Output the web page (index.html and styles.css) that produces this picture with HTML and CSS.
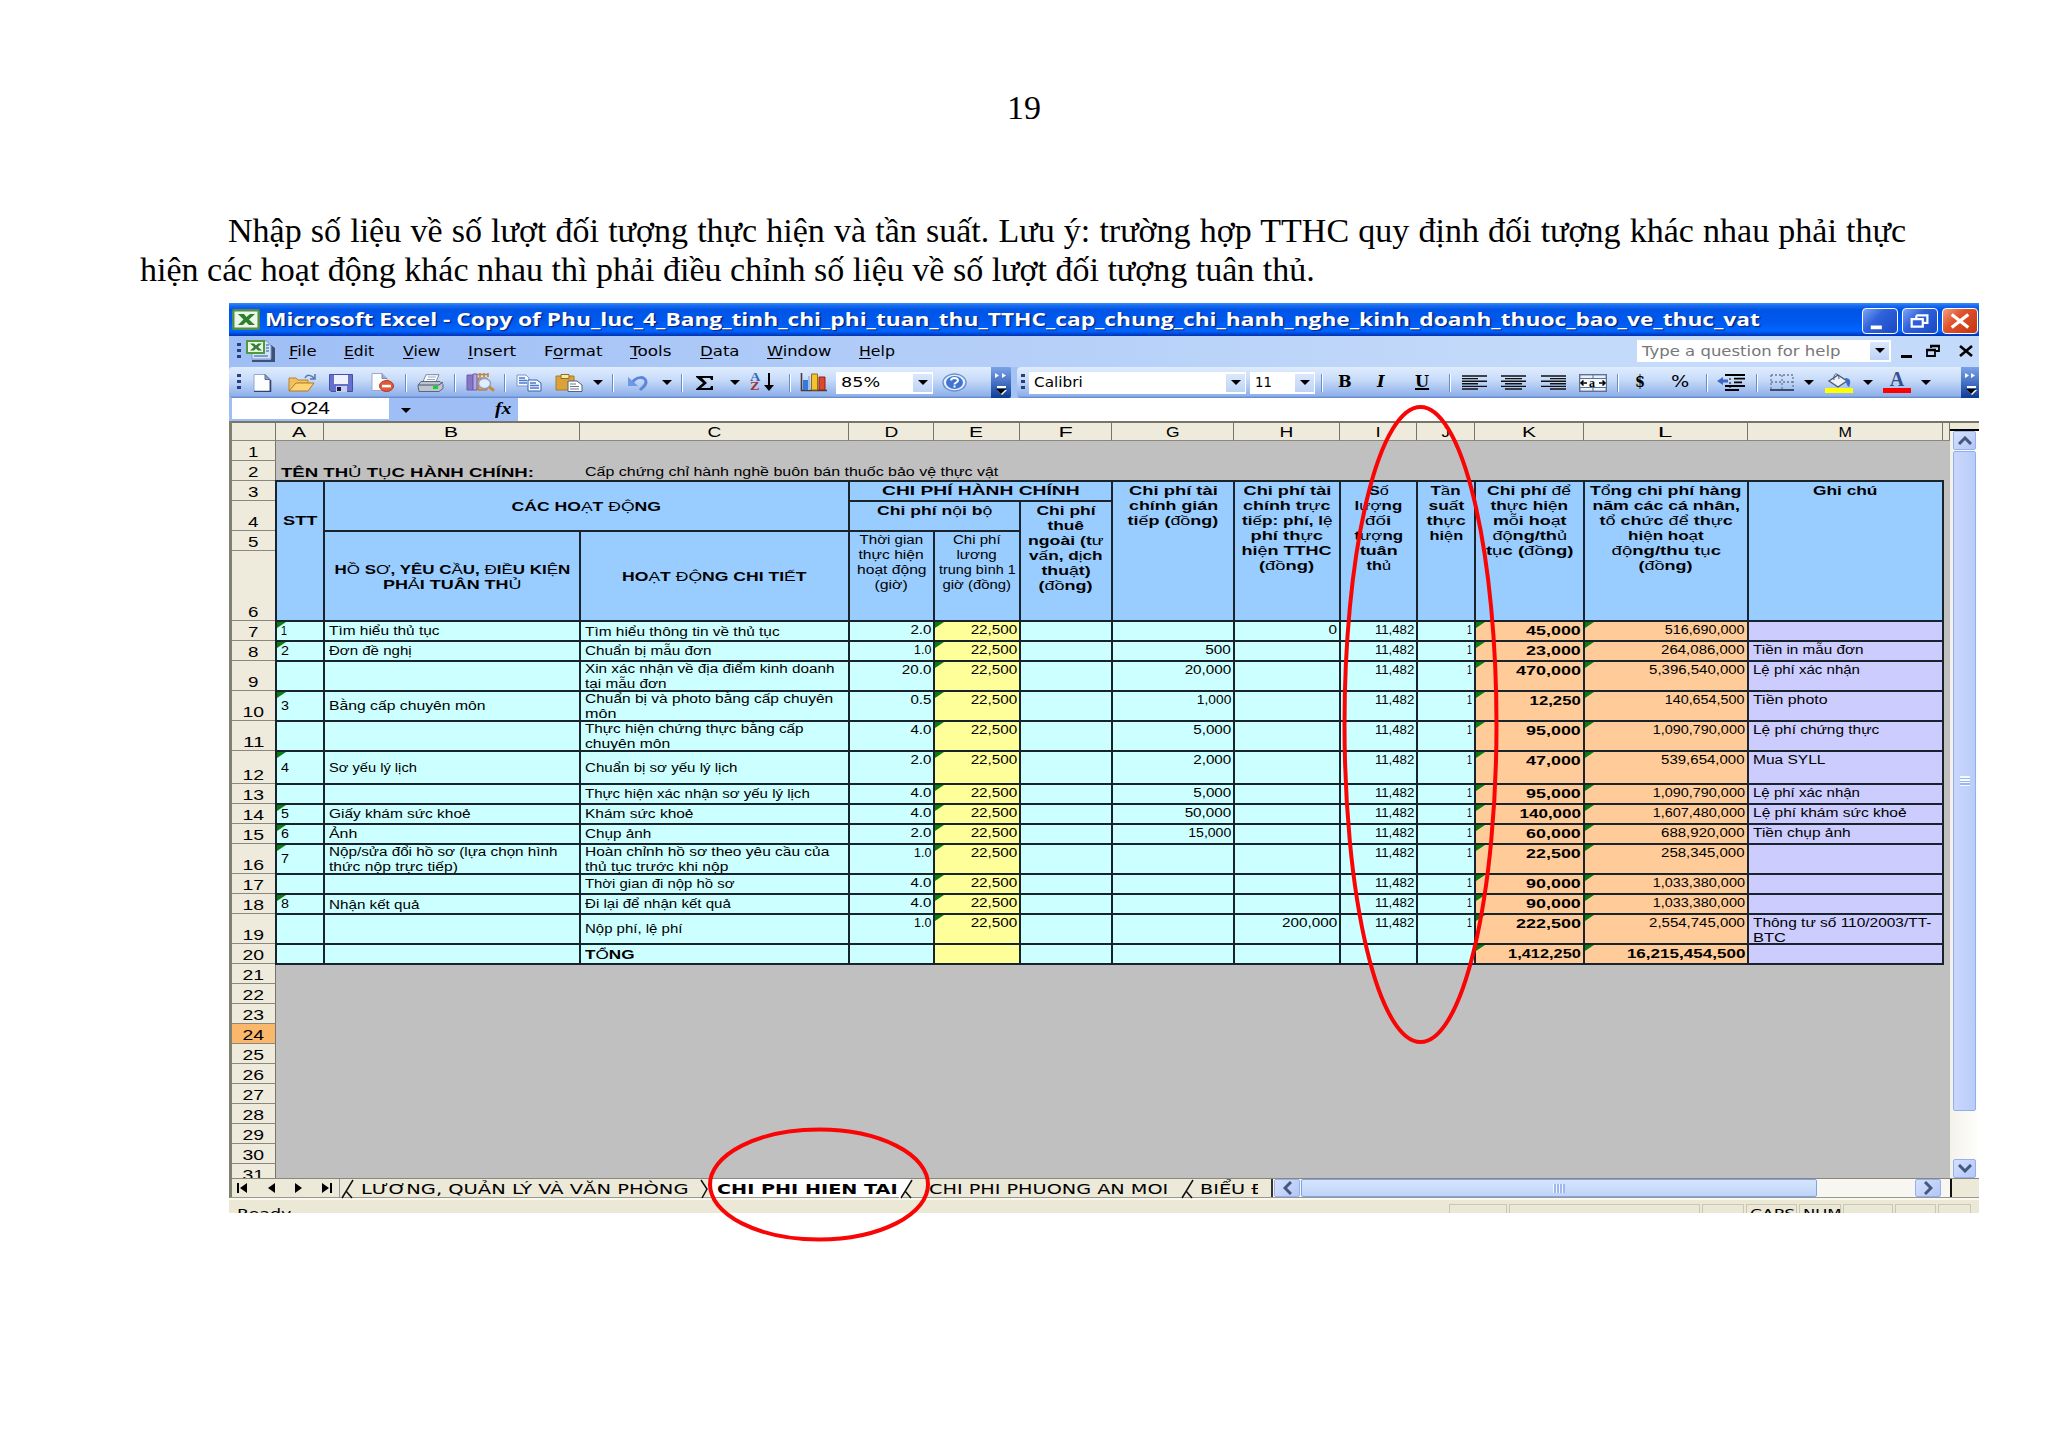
FILE: index.html
```html
<!DOCTYPE html>
<html lang="vi">
<head>
<meta charset="utf-8">
<title>19</title>
<link rel="stylesheet" href="styles.css">
</head>
<body>
<div class="pageno">19</div>
<p class="para">Nhập số liệu về số lượt đối tượng thực hiện và tần suất. Lưu ý: trường hợp TTHC quy định đối tượng khác nhau phải thực hiện các hoạt động khác nhau thì phải điều chỉnh số liệu về số lượt đối tượng tuân thủ.</p>

<div class="window">
  <div class="titlebar">
    <svg class="xl" width="28" height="21" viewBox="0 0 28 21"><rect width="28" height="21" rx="2" fill="#4f8f4a"/><rect x="2.500" y="2.500" width="23" height="16" fill="#eef6ea"/><path d="M6 5h6l2.500 3L18 5h5l-6 5.500 6 5.500h-6l-3-3-3 3H6l5.500-5.500z" fill="#2c8030"/></svg>
    <div class="title"><span class="fit" data-w="1495">Microsoft Excel - Copy of Phu_luc_4_Bang_tinh_chi_phi_tuan_thu_TTHC_cap_chung_chi_hanh_nghe_kinh_doanh_thuoc_bao_ve_thuc_vat</span></div>
    <div class="winbtns">
      <svg class="wb" viewBox="0 0 36 26"><path d="M8 18h12v4H8z" fill="#fff"/></svg>
      <svg class="wb" viewBox="0 0 36 26"><path d="M14 7h12v8h-4M14 7v3M9 11h12v8H9z" fill="none" stroke="#fff" stroke-width="2.400"/></svg>
      <svg class="wb red" viewBox="0 0 36 26"><path d="M9 6l18 14M27 6L9 20" stroke="#fff" stroke-width="3.600"/></svg>
    </div>
  </div>

  <div class="menubar">
    <i class="dots short"></i>
    <svg width="30" height="22" viewBox="0 0 30 22"><path d="M6 20h19V5l4 3v14H6z" fill="#3c5078"/><path d="M6 13v6h19V6l-4-5h-3v12z" fill="#d5e4fb" stroke="#7f97c8"/><path d="M20 5h3M20 8h3M20 11h3M8 16h14" stroke="#5f82c4" stroke-width="1.500"/><rect x="1" y="1" width="17" height="12" fill="#eef6e4" stroke="#4f9a3c" stroke-width="2"/><path d="M4 3.500h4l2 2 2-2h4L12 7l4 3.500h-4l-2-2-2 2H4L8 7z" fill="#2c8030"/></svg>
    <span class="m"><span class="fit" data-w="27"><u>F</u>ile</span></span>
    <span class="m"><span class="fit" data-w="30"><u>E</u>dit</span></span>
    <span class="m"><span class="fit" data-w="37"><u>V</u>iew</span></span>
    <span class="m"><span class="fit" data-w="48"><u>I</u>nsert</span></span>
    <span class="m"><span class="fit" data-w="58">F<u>o</u>rmat</span></span>
    <span class="m"><span class="fit" data-w="42"><u>T</u>ools</span></span>
    <span class="m"><span class="fit" data-w="39"><u>D</u>ata</span></span>
    <span class="m"><span class="fit" data-w="64"><u>W</u>indow</span></span>
    <span class="m"><span class="fit" data-w="36"><u>H</u>elp</span></span>
    <div class="ask"><span class="fit" data-w="199">Type a question for help</span><b class="drop"></b></div>
    <svg width="12" height="14" viewBox="0 0 12 14"><path d="M0 11h11v3H0z"/></svg>
    <svg width="15" height="14" viewBox="0 0 15 14"><path d="M5 4V2h8v5h-3M1 6h8v6H1z" fill="none" stroke="#000" stroke-width="1.800"/><path d="M4 2h10M0 6h10" stroke="#000" stroke-width="2.600"/></svg>
    <svg width="15" height="14" viewBox="0 0 15 14"><path d="M1 2l12 10M13 2L1 12" stroke="#000" stroke-width="2.600"/></svg>
  </div>

  <div class="toolrow">
    <div class="toolbar std">
      <i class="dots"></i>
      <svg width="19" height="18" viewBox="0 0 19 18"><path d="M1 .5h11l5 5v12H1z" fill="#fdfeff" stroke="#97a8cc"/><path d="M12 .5v5h5z" fill="#8fa2cc" stroke="#5a6c98"/><path d="M17.500 6v11.500H1" fill="none" stroke="#33436e" stroke-width="1.600"/></svg>
      <svg width="28" height="18" viewBox="0 0 28 18"><path d="M1 17V4h7l2 2h10v4z" fill="#f0c062" stroke="#b9852c"/><path d="M1 17L8 9h18l-6 8z" fill="#ffd474" stroke="#b07a1e"/><path d="M17 4c2-4 6-3 9 0M27 0v5h-5" fill="none" stroke="#5377a8" stroke-width="1.500"/></svg>
      <svg width="24" height="18" viewBox="0 0 24 18"><path d="M.5.5h23v17H2l-1.500-1.500z" fill="#6570cc" stroke="#474fa6"/><path d="M5 1h14v9H5z" fill="#eef2ff"/><path d="M7 12h11v6H7z" fill="#c8cdea"/><path d="M8 13h4v4H8z" fill="#171b4a"/></svg>
      <svg width="23" height="19" viewBox="0 0 23 19"><path d="M1 .5h10l5 5v12H1z" fill="#fdfeff" stroke="#9babcc"/><path d="M11 .5v5h5" fill="#9cadd2" stroke="#7888ac"/><ellipse cx="15.500" cy="13" rx="7" ry="5.500" fill="#e0573a" stroke="#b8391f"/><path d="M11 11.800h9v2.600h-9z" fill="#fff"/></svg>
      <i class="sep"></i>
      <svg width="27" height="18" viewBox="0 0 27 18"><path d="M9 .7h13l-3 7H6z" fill="#fff" stroke="#7a869e"/><path d="M11 3h8M10 5.500h8" stroke="#9aa6bd"/><path d="M4 7.500h19l3 3v4l-4 3H2l-1-6z" fill="#bcc5d0" stroke="#5b677c"/><path d="M1 11h21l4-3" fill="none" stroke="#4b5568"/><path d="M16 12h5v3h-5z" fill="#19d02c"/></svg>
      <i class="sep"></i>
      <svg width="29" height="19" viewBox="0 0 29 19"><path d="M1 2h6v15H1z" fill="#8676c4" stroke="#6a5bb0"/><path d="M7 1h4v16H7z" fill="#b4a6e2" stroke="#6a5bb0"/><path d="M12 5h9v12h-9z" fill="#e2a45c" stroke="#a5702e"/><path d="M11 1.500h11M14 0v4M18 0v4M22 0v4" stroke="#b98548" stroke-width="1.600"/><ellipse cx="18.500" cy="10.500" rx="6" ry="5" fill="#e2eeff" stroke="#8ba0c4" stroke-width="1.500"/><path d="M23 14l5 3.500" stroke="#c98a32" stroke-width="2.800"/></svg>
      <i class="sep"></i>
      <svg width="27" height="18" viewBox="0 0 27 18"><g fill="#f4f8ff"><path d="M1 1h9l3 3v8H1z" stroke="#7f97c4"/><path d="M12 6h9l4 3v8H12z" stroke="#3a5fae"/></g><path d="M3 4h6M3 6.500h8M3 9h8M14 9h6M14 11.500h9M14 14h9" stroke="#4a78cc" stroke-width="1.300"/></svg>
      <svg width="29" height="18" viewBox="0 0 29 18"><path d="M1 2h18v14H1z" fill="#dba23a" stroke="#a87a2a"/><path d="M6 .5h8v4H6z" fill="#ffe79a" stroke="#8a6d26"/><path d="M13 7h9l5 4v6.500H13z" fill="#fff" stroke="#55637c"/><path d="M15 10h6M15 12.500h9M15 15h9" stroke="#6b7993"/></svg>
      <i class="arr"></i>
      <i class="sep"></i>
      <svg width="22" height="16" viewBox="0 0 22 16"><path d="M5 8c4-7 14-7 14-1 0 4-3 5-6 8" fill="none" stroke="#5c87d8" stroke-width="3"/><path d="M1 2v9h10z" fill="#6f98e2"/></svg>
      <i class="arr"></i>
      <i class="sep"></i>
      <svg width="18" height="14" viewBox="0 0 18 14"><path d="M0 0h17v4h-2l-1-2H6l5 5-6 5h9l1-2h2v4H0v-1l7-6-7-6z"/></svg>
      <i class="arr"></i>
      <div class="sort"><span>A<br><b>Z</b></span><svg width="10" height="19" viewBox="0 0 10 19"><path d="M5 0v15" stroke="#000" stroke-width="2"/><path d="M0 12h10l-5 6z"/></svg></div>
      <i class="sep"></i>
      <svg width="28" height="19" viewBox="0 0 28 19"><path d="M1.500 0v17.500H27" fill="none" stroke="#4a3a38" stroke-width="1.600"/><path d="M3 7h5v10H3z" fill="#3a78d8"/><path d="M8 3h2v14H8z" fill="#9cc0f0"/><path d="M11.500 1h6v16h-6z" fill="#f3c22e" stroke="#946c10"/><path d="M19 4h6v13h-6z" fill="#e0482c" stroke="#8e2312"/></svg>
      <div class="combo z"><span class="fit" data-w="39">85%</span><b class="drop"></b></div>
      <svg width="25" height="19" viewBox="0 0 25 19"><ellipse cx="12.500" cy="9.500" rx="11.500" ry="8.500" fill="#e6f0ff" stroke="#6b90cc" stroke-width="1.400"/><ellipse cx="12.500" cy="9.500" rx="8.500" ry="6.500" fill="#3f74d0"/><path d="M9 7.500c0-3.500 7-3.500 7 0 0 2-3.500 2-3.500 4M12.500 12.500v2" fill="none" stroke="#fff" stroke-width="2"/></svg>
      <i class="more"><svg width="20" height="31" viewBox="0 0 20 31"><path d="M4 6l4 2.500-4 2.500zM11 6l4 2.500-4 2.500z" fill="#fff"/><path d="M6 20h9" stroke="#fff" stroke-width="2"/><path d="M6 23h10l-5 5z" fill="#fff"/><path d="M5 22h10l-5 5z"/></svg></i>
    </div>
    <div class="toolbar fmt">
      <i class="dots"></i>
      <div class="combo f"><span class="fit" data-w="49">Calibri</span><b class="drop"></b></div>
      <div class="combo s"><span class="fit" data-w="17">11</span><b class="drop"></b></div>
      <i class="sep"></i>
      <b class="g">B</b><b class="g"><em>I</em></b><b class="g un">U</b>
      <i class="sep"></i>
      <svg class="ln" width="25" height="15" viewBox="0 0 25 15"><path d="M0 1h25M0 3.600h16M0 6.200h25M0 8.800h16M0 11.400h25M0 14h16"/></svg>
      <svg class="ln" width="25" height="15" viewBox="0 0 25 15"><path d="M0 1h25M4 3.600h17M0 6.200h25M4 8.800h17M0 11.400h25M4 14h17"/></svg>
      <svg class="ln" width="25" height="15" viewBox="0 0 25 15"><path d="M0 1h25M9 3.600h16M0 6.200h25M9 8.800h16M0 11.400h25M9 14h16"/></svg>
      <svg width="28" height="18" viewBox="0 0 28 18"><rect x=".7" y=".7" width="26.600" height="16.600" fill="#e8f0fc" stroke="#5f7190" stroke-width="1.400"/><path d="M14 1v16M1 4.500h26M1 13.500h26" stroke="#5f7190"/><rect x="1.500" y="5" width="25" height="8" fill="#f7faff"/><path d="M2 9h6M26 9h-6M4.500 6.500L2 9l2.500 2.500M23.500 6.500L26 9l-2.500 2.500" fill="none" stroke="#000" stroke-width="1.600"/><text x="10" y="13" class="ma">a</text></svg>
      <i class="sep"></i>
      <b class="g dl">$</b><b class="pc">%</b>
      <i class="sep"></i>
      <svg width="29" height="17" viewBox="0 0 29 17"><path d="M8 1h20M17 4.700h11M17 8.400h8M8 12h20M8 16h14" stroke="#000" stroke-width="1.800"/><path d="M13 0v17" stroke="#000" stroke-dasharray="2 2"/><path d="M0 7l6-4v2.500h5v3H6V11z" fill="#3c68c8"/></svg>
      <i class="sep"></i>
      <svg width="24" height="17" viewBox="0 0 24 17"><path d="M1 1h22v14M1 1v14M12 1v14M1 8h22" fill="none" stroke="#6b7a98" stroke-width="1.300" stroke-dasharray="2 2"/><path d="M0 16h24" stroke="#33415e" stroke-width="1.800"/></svg>
      <i class="arr"></i>
      <svg width="28" height="21" viewBox="0 0 28 21"><path d="M4 9l9-6 9 6-9 6z" fill="#eef2f8" stroke="#4b5870" stroke-width="1.400"/><path d="M9 8C8 0 14 0 14 7" fill="none" stroke="#4b5870"/><path d="M20 6c6 0 6 4 4 9-2-1-3-4-4-9z" fill="#3c6dc2"/><path d="M0 16h28v5H0z" fill="#ff0"/></svg>
      <i class="arr"></i>
      <div class="fc">A</div>
      <i class="arr"></i>
      <i class="more"><svg width="18" height="31" viewBox="0 0 18 31"><path d="M4 6l4 2.500-4 2.500zM10 6l4 2.500-4 2.500z" fill="#fff"/><path d="M6 20h9" stroke="#fff" stroke-width="2"/><path d="M6 23h10l-5 5z" fill="#fff"/><path d="M5 22h10l-5 5z"/></svg></i>
    </div>
  </div>

  <div class="formula">
    <div class="namebox"><span class="fit c" data-w="39">O24</span></div>
    <i class="arr"></i>
    <em class="fx"><span class="fit" data-w="16">fx</span></em>
    <div class="finput"></div>
  </div>

  <div class="work">
    <div class="sheet" id="sheet"></div>
    <div class="vscroll">
      <div class="split"></div>
      <div class="sb"><svg width="14" height="9" viewBox="0 0 14 9"><path d="M1 8l6-6 6 6" /></svg></div>
      <div class="vthumb"><i></i></div>
      <div class="gap"></div>
      <div class="sb"><svg width="14" height="9" viewBox="0 0 14 9"><path d="M1 1l6 6 6-6"/></svg></div>
    </div>
  </div>

  <div class="tabs">
    <div class="nav">
      <svg width="11" height="10" viewBox="0 0 11 10"><path d="M0 0h2v10H0zM10 0v10L3 5z"/></svg>
      <svg width="11" height="10" viewBox="0 0 11 10"><path d="M8 0v10L1 5z"/></svg>
      <svg width="11" height="10" viewBox="0 0 11 10"><path d="M1 0v10l7-5z"/></svg>
      <svg width="11" height="10" viewBox="0 0 11 10"><path d="M0 0v10l7-5zM8 0h2v10H8z"/></svg>
    </div>
    <svg class="sl" width="14" height="20" viewBox="0 0 14 20"><path d="M13 1L2 19M6 12l6 7"/></svg>
    <div class="tab t1"><span class="fit" data-w="328">LƯƠNG, QUẢN LÝ VÀ VĂN PHÒNG</span></div>
    <svg class="sl" width="10" height="20" viewBox="0 0 10 20"><path d="M2 1l6 9-5 9"/></svg>
    <div class="tab t2"><span class="fit" data-w="181">CHI PHI HIEN TAI</span></div>
    <svg class="sl on" width="14" height="20" viewBox="0 0 14 20"><path class="bg" d="M0 0h13L7 12 3 19H0z"/><path d="M13 1L2 19M6 12l6 7"/></svg>
    <div class="tab t3"><span class="fit" data-w="239">CHI PHI PHUONG AN MOI</span></div>
    <svg class="sl" width="14" height="20" viewBox="0 0 14 20"><path d="M13 1L2 19M6 12l6 7"/></svg>
    <div class="tab t4"><span class="fit" data-w="66">BIỂU Đ</span></div>
    <div class="hscroll">
      <div class="sb h"><svg width="9" height="14" viewBox="0 0 9 14"><path d="M8 1L2 7l6 6"/></svg></div>
      <div class="hthumb"><i></i></div>
      <div class="gap"></div>
      <div class="sb h"><svg width="9" height="14" viewBox="0 0 9 14"><path d="M1 1l6 6-6 6"/></svg></div>
    </div>
  </div>

  <div class="status">
    <div class="ready"><span class="fit" data-w="54">Ready</span></div>
    <i></i><i></i><i></i><i><span class="fit" data-w="45">CAPS</span></i><i><span class="fit" data-w="38">NUM</span></i><i></i><i></i><i></i>
  </div>
</div>

<svg class="marks" width="2048" height="1448" viewBox="0 0 2048 1448"><ellipse cx="1420.500" cy="724.500" rx="76" ry="317.500"/><ellipse cx="819" cy="1184.500" rx="109" ry="55"/></svg>
<script src="app.js"></script>
</body>
</html>
```
FILE: styles.css
```css
* { box-sizing: border-box; }
body { margin: 0; background: #fff; width: 2048px; height: 1448px; overflow: hidden; position: relative; color: #000; font-family: "DejaVu Sans", sans-serif; }
.pageno { font: 34px/40px "Liberation Serif", serif; text-align: center; padding-top: 88px; }
.para { font: 34px/39px "Liberation Serif", serif; margin: 83px 142px 0 140px; height: 92px; text-indent: 88px; text-align: justify; }
.fit { display: inline-block; flex: none; white-space: nowrap; transform-origin: 0 50%; }
.fit.c { transform-origin: 50% 50%; }
.fit.r { transform-origin: 100% 50%; }
.window { margin-left: 229px; width: 1750px; height: 910px; background: #ece9d8; overflow: hidden; }

.titlebar { height: 33px; display: flex; align-items: center; padding: 2px 1px 0 3px; background: linear-gradient(#3a8df5 0, #1a6cf0 8%, #0055e5 20%, #0058ee 55%, #0066ff 85%, #003dc8 96%, #0035b0 100%); }
.xl { margin-bottom: 3px; }
.title { width: 1598px; margin-left: 5px; color: #fff; font: bold 17px/24px "Open Sans", sans-serif; padding-bottom: 2px; text-shadow: 1px 1px 1px #0a1f70; }
.winbtns { display: flex; gap: 4px; margin-left: auto; }
.wb { width: 36px; height: 26px; border: 1.500px solid #fff; border-radius: 4px; background: linear-gradient(135deg, #7aa3f5, #2f62dc 40%, #1c48c4); }
.wb.red { background: linear-gradient(135deg, #f0a080, #e0512c 40%, #c2360f); }

.menubar { height: 31px; display: grid; align-items: center; padding: 0 0 2px 8px; background: linear-gradient(90deg, #9ebef5, #c4dafa 75%); grid-template-columns: 9px 43px 55px 59px 65px 76px 86px 70px 67px 92px 778px 264px 25px 33px 18px; font-size: 14px; line-height: 20px; }
.dots { width: 4px; height: 18px; background: repeating-linear-gradient(#27417c 0 3px, transparent 3px 6px); }
.dots.short { height: 15px; }
.m u { text-underline-offset: 2px; }
.m { padding-top: 1px; }
.ask { width: 254px; height: 22px; background: #fff; display: flex; align-items: center; padding: 0 2px 0 5px; color: #777; }
.drop { margin-left: auto; width: 19px; height: 18px; flex: none; background: linear-gradient(#dbe8fc, #bdd3f5); display: grid; place-items: center; }
.drop::after, .arr::after { content: ""; display: block; border: 5px solid transparent; border-top-color: #000; border-bottom: 0; }

.toolrow { height: 31px; display: flex; background: #a5c2f4; }
.toolbar { height: 31px; display: grid; align-items: center; background: linear-gradient(#e0ecfe, #c8dcf9 40%, #8fb0ea 93%, #5d82c8); border-radius: 4px 0 0 4px; }
.std { width: 781px; padding-left: 8px; margin-right: 7px; grid-template-columns: 16px 35px 41px 42px 34px 12px 37px 12px 38px 12px 39px 38px 19px 15px 35px 19px 15px 34px 20px 39px 11px 36px 106px 49px 19px; }
.fmt { width: 962px; padding-left: 4px; grid-template-columns: 8px 221px 71px 17px 39px 38px 34px 13px 39px 40px 38px 38px 18px 36px 35px 11px 39px 14px 34px 21px 38px 20px 38px 40px 18px; }
.sep { width: 2px; height: 18px; background: #6a8ccb; border-right: 1px solid #fff; }
.combo { height: 22px; background: #fff; display: flex; align-items: center; padding: 0 1px 2px 5px; font-size: 14px; }
.combo .drop { margin-top: 2px; }
.combo.z { width: 97px; } .combo.f { width: 217px; } .combo.s { width: 65px; }
.more { width: 20px; height: 31px; background: linear-gradient(#7ba2e7, #4c77c8 45%, #0c3a94); border-radius: 0 2px 2px 0; }
.more svg { display: block; }
.g { font: 900 17px/18px "DejaVu Serif", serif; transform: scaleX(.95); transform-origin: 0 50%; padding-bottom: 3px; }
.un { text-decoration: underline; text-decoration-thickness: 2px; }
.dl { transform: scaleX(.85); }
.pc { font: 16px/18px "DejaVu Sans", sans-serif; padding-bottom: 2px; transform: scaleX(1.2); transform-origin: 0 50%; }
.ln { stroke: #111; stroke-width: 1.400; }
.ma { font: bold 12px "Liberation Serif", serif; }
.sort { display: flex; font: bold 12px/9px "Liberation Serif", serif; color: #3467b8; gap: 5px; }
.sort span { transform: scaleX(1.2); transform-origin: 0 0; }
.sort b { color: #a33232; }
.fc { width: 28px; height: 21px; border-bottom: 5px solid #f00; font: bold 20px/15px "Liberation Serif", serif; color: #34508e; text-align: center; }

.formula { height: 23px; background: #9ebef5; display: flex; padding-left: 3px; align-items: flex-start; }
.namebox { width: 157px; height: 21px; background: #fff; display: flex; justify-content: center; align-items: center; font: 16px/20px "Liberation Sans", sans-serif; }
.formula .arr { margin: 10px 0 0 12px; width: 94px; }
.arr::after { width: 0; }
.fx { font: italic bold 16px/21px "Liberation Serif", serif; width: 23px; }
.finput { flex: 1; height: 23px; background: #fff; }

.work { height: 757px; display: flex; background: #c0c0c0; border-left: 3px solid #808070; }
.sheet { width: 1718px; height: 757px; overflow: hidden; display: grid; grid-template-columns: 44px 48px 256px 269px 85px 86px 92px 122px 106px 77px 58px 109px 164px 195px 7px; grid-template-rows: 20px 20px 20px 20px 30px 20px 70px 20px 20px 30px 30px 30px 33px 20px 20px 20px 30px 20px 20px 30px repeat(12, 20px); font: 12.500px/15px "Liberation Sans", sans-serif; }
.hd { background: #efebdc; border-right: 1.500px solid #77756a; border-bottom: 1.500px solid #8a887c; font: 15px/16px "Liberation Sans", sans-serif; display: flex; justify-content: center; align-items: flex-end; overflow: hidden; }
.hd.top { border-top: 2px solid #77756a; align-items: center; }
.hd.sel { background: #fbb86c; }
.cell { display: flex; flex-direction: column; border: 2px solid #18232b; margin: -1px; padding: 1px 2px 0 4px; position: relative; min-width: 0; }
.cell > div { height: 15px; display: flex; flex: none; }
.cell.mid { justify-content: center; }
.cell.bot { justify-content: flex-end; }
.cell.cen > div { justify-content: center; }
.cell.cen { padding: 1px 0 0; }
.cell.rt > div { justify-content: flex-end; }
.cell.bd { font-weight: bold; font-size: 13px; }
.cell .n { font-weight: normal; }
.cell.plain { border-color: transparent; }
.blue { background: #99ccff; } .cyan { background: #ccffff; } .yel { background: #ffff99; } .org { background: #ffcc99; } .lil { background: #ccccff; }
.tri::before { content: ""; position: absolute; left: 0; top: 0; border-top: 6px solid #0a7d12; border-right: 9px solid transparent; }

.vscroll { width: 29px; display: flex; flex-direction: column; align-items: center; background: linear-gradient(90deg, #f4f2ea, #fefefb); border-top: 2px solid #77756a; }
.split { height: 8px; width: 29px; background: #ece9d8; border-bottom: 2px solid #000; flex: none; }
.sb { width: 23px; height: 19px; flex: none; background: linear-gradient(135deg, #d5e0fd, #b3c6f6); border: 1px solid #96b0ee; border-radius: 2px; display: grid; place-items: center; }
.sb path { fill: none; stroke: #43587e; stroke-width: 3; }
.vthumb { width: 23px; height: 660px; margin-top: 1px; background: linear-gradient(90deg, #cbd6fd, #b8cdf8); border: 1px solid #8fb0ee; border-radius: 2px; display: grid; place-items: center; flex: none; }
.vthumb i { width: 10px; height: 10px; background: repeating-linear-gradient(#f4f8ff 0 1.500px, #9cb6f0 1.500px 3px); }
.gap { flex: 1; }

.tabs { height: 20px; display: flex; align-items: stretch; background: #ece9d8; border-left: 3px solid #808070; border-top: 1px solid #8a887c; border-bottom: 1px solid #9a988c; font-size: 14px; line-height: 20px; }
.nav { width: 108px; display: grid; grid-template-columns: 30px 27px 28px 20px; padding-left: 5px; align-items: center; border-right: 1px solid #999; }
.sl { flex: none; fill: none; stroke: #111; stroke-width: 1.500; }
.sl .bg { fill: #fff; stroke: none; }
.tab { flex: none; overflow: hidden; }
.t1 { width: 345px; padding-left: 7px; }
.t2 { width: 190px; background: #fff; padding-left: 8px; font-weight: bold; }
.t3 { width: 267px; padding-left: 16px; }
.t4 { width: 64px; padding-left: 6px; }
.tabs .hscroll { flex: none; width: 681px; margin-left: auto; margin-right: 27px; border-left: 2px solid #333; border-right: 2px solid #111; padding: 0 9px 0 1px; display: flex; background: #f7f6f0; }
.sb.h { width: 26px; height: 18px; }
.hthumb { width: 516px; height: 18px; margin-left: 1px; background: linear-gradient(#d6e5fd, #bed4fa); border: 1px solid #7fa3e4; border-radius: 2px; display: grid; place-items: center; }
.hthumb i { width: 12px; height: 9px; background: repeating-linear-gradient(90deg, #f4f8ff 0 1.500px, #9cb6f0 1.500px 3px); }

.status { height: 15px; border-top: 2px solid #faf9f0; display: grid; background: #ebe8d6; grid-template-columns: 1218px 58px 191px 42px 51px 42px 50px 41px 33px; column-gap: 2px; padding-top: 4px; font-size: 13px; line-height: 15px; overflow: hidden; }
.ready { padding: 2px 0 0 8px; }
.status i { font-style: normal; height: 20px; border: 1px solid #c9c6b6; padding: 1px 0 0 3px; }
.marks { position: absolute; left: 0; top: 0; fill: none; stroke: #fa0505; stroke-width: 4; }
```
FILE: app.js
```js
const sheet = document.getElementById('sheet');
const THIN = /[\u1E00-\u1EFF\u0110\u0111\u01A0\u01A1\u01AF\u01B0]/g;

function div(cls, c, r, c2, r2) {
  const d = document.createElement('div');
  d.className = cls;
  d.style.gridArea = `${r + 1} / ${c + 2} / ${(r2 || r) + 2} / ${(c2 || c) + 3}`;
  sheet.appendChild(d);
  return d;
}
// lines: [text, width, text, width, ...]
function cell(cls, c, r, lines = [], c2, r2) {
  const d = div('cell ' + cls, c, r, c2, r2);
  const side = /\bcen\b/.test(cls) ? ' c' : /\brt\b/.test(cls) ? ' r' : '';
  for (let i = 0; i < lines.length; i += 2) {
    const t = /\bbd\b/.test(cls) ? lines[i].replace(THIN, '<span class="n">$&</span>') : lines[i];
    d.insertAdjacentHTML('beforeend', `<div><span class="fit${side}" data-w="${lines[i + 1]}">${t}</span></div>`);
  }
}
function num(cls, c, r, s) {
  if (!s) return cell(cls, c, r);
  const b = /\bbd\b/.test(cls);
  let w = 0;
  for (const ch of s) w += /[,.]/.test(ch) ? (b ? 5 : 3.3) : ch === '1' ? (b ? 6.5 : 5) : (b ? 10 : 8.6);
  cell(cls + ' rt', c, r, [s, w]);
}

// sheet title
cell('plain bd bot', 0, 2, ['TÊN THỦ TỤC HÀNH CHÍNH:', 253], 1);
cell('plain bot', 2, 2, ['Cấp chứng chỉ hành nghề buôn bán thuốc bảo vệ thực vật', 413], 6);

// heading block
const H = 'blue bd cen';
cell(H, 0, 3, ['', 0, '', 0, 'STT', 35], 0, 6);
cell(H + ' mid', 1, 3, ['CÁC HOẠT ĐỘNG', 150], 2, 4);
cell(H + ' mid', 1, 5, ['HỒ SƠ, YÊU CẦU, ĐIỀU KIỆN', 236, 'PHẢI TUÂN THỦ', 138], 1, 6);
cell(H + ' mid', 2, 5, ['HOẠT ĐỘNG CHI TIẾT', 185], 2, 6);
cell(H, 3, 3, ['CHI PHÍ HÀNH CHÍNH', 198], 5);
cell(H, 3, 4, ['Chi phí nội bộ', 115], 4);
cell('blue cen', 3, 5, ['Thời gian', 64, 'thực hiện', 65, 'hoạt động', 70, '(giờ)', 33], 3, 6);
cell('blue cen', 4, 5, ['Chi phí', 48, 'lương', 40, 'trung bình 1', 77, 'giờ (đồng)', 69], 4, 6);
cell(H, 5, 4, ['Chi phí', 59, 'thuê', 36, 'ngoài (tư', 76, 'vấn, dịch', 74, 'thuật)', 49, '(đồng)', 54], 5, 6);
cell(H, 6, 3, ['Chi phí tài', 89, 'chính gián', 89, 'tiếp (đồng)', 91], 6, 6);
cell(H, 7, 3, ['Chi phí tài', 88, 'chính trực', 88, 'tiếp: phí, lệ', 91, 'phí thực', 72, 'hiện TTHC', 90, '(đồng)', 55], 7, 6);
cell(H, 8, 3, ['Số', 20, 'lượng', 48, 'đối', 26, 'tượng', 48, 'tuân', 37, 'thủ', 25], 8, 6);
cell(H, 9, 3, ['Tần', 30, 'suất', 36, 'thực', 39, 'hiện', 34], 9, 6);
cell(H, 10, 3, ['Chi phí để', 84, 'thực hiện', 78, 'mỗi hoạt', 73, 'động/thủ', 74, 'tục (đồng)', 87], 10, 6);
cell(H, 11, 3, ['Tổng chi phí hàng', 151, 'năm các cá nhân,', 147, 'tổ chức để thực', 133, 'hiện hoạt', 76, 'động/thu tục', 110, '(đồng)', 54], 11, 6);
cell(H, 12, 3, ['Ghi chú', 64], 12, 6);

// A, B, C, D, G, H, K, L, M for rows 7 to 19
const rows = [
  ['1', ['Tìm hiểu thủ tục', 111], ['Tìm hiểu thông tin về thủ tục', 195], '2.0', '', '0', '45,000', '516,690,000', []],
  ['2', ['Đơn đề nghị', 83], ['Chuẩn bị mẫu đơn', 126], '1.0', '500', '', '23,000', '264,086,000', ['Tiền in mẫu đơn', 110]],
  ['', [], ['Xin xác nhận về địa điểm kinh doanh', 249, 'tại mẫu đơn', 82], '20.0', '20,000', '', '470,000', '5,396,540,000', ['Lệ phí xác nhận', 107]],
  ['3', ['Bằng cấp chuyên môn', 156], ['Chuẩn bị và photo bằng cấp chuyên', 248, 'môn', 31], '0.5', '1,000', '', '12,250', '140,654,500', ['Tiền photo', 75]],
  ['', [], ['Thực hiện chứng thực bằng cấp', 219, 'chuyên môn', 85], '4.0', '5,000', '', '95,000', '1,090,790,000', ['Lệ phí chứng thực', 126]],
  ['4', ['Sơ yếu lý lịch', 88], ['Chuẩn bị sơ yếu lý lịch', 152], '2.0', '2,000', '', '47,000', '539,654,000', ['Mua SYLL', 72]],
  ['', [], ['Thực hiện xác nhận sơ yếu lý lịch', 225], '4.0', '5,000', '', '95,000', '1,090,790,000', ['Lệ phí xác nhận', 107]],
  ['5', ['Giấy khám sức khoẻ', 142], ['Khám sức khoẻ', 109], '4.0', '50,000', '', '140,000', '1,607,480,000', ['Lệ phí khám sức khoẻ', 154]],
  ['6', ['Ảnh', 28], ['Chụp ảnh', 66], '2.0', '15,000', '', '60,000', '688,920,000', ['Tiền chụp ảnh', 98]],
  ['7', ['Nộp/sửa đổi hồ sơ (lựa chọn hình', 229, 'thức nộp trực tiếp)', 129], ['Hoàn chỉnh hồ sơ theo yêu cầu của', 244, 'thủ tục trước khi nộp', 143], '1.0', '', '', '22,500', '258,345,000', []],
  ['', [], ['Thời gian đi nộp hồ sơ', 150], '4.0', '', '', '90,000', '1,033,380,000', []],
  ['8', ['Nhận kết quả', 90], ['Đi lại để nhận kết quả', 146], '4.0', '', '', '90,000', '1,033,380,000', []],
  ['', [], ['Nộp phí, lệ phí', 97], '1.0', '', '200,000', '222,500', '2,554,745,000', ['Thông tư số 110/2003/TT-', 178, 'BTC', 33]]
];
rows.forEach((d, i) => {
  const r = i + 7;
  cell('cyan mid' + (d[0] ? ' tri' : ''), 0, r, d[0] ? [d[0], d[0] === '1' ? 6 : 8] : []);
  cell('cyan ' + (r === 18 ? 'bot' : 'mid'), 1, r, d[1]);
  cell('cyan ' + (r === 7 ? 'bot' : 'mid'), 2, r, d[2]);
  num('cyan', 3, r, d[3]);
  num('yel tri', 4, r, '22,500');
  cell('cyan', 5, r);
  num('cyan', 6, r, d[4]);
  num('cyan', 7, r, d[5]);
  num('cyan', 8, r, '11,482');
  num('cyan', 9, r, '1');
  num('org bd tri', 10, r, d[6]);
  num('org tri', 11, r, d[7]);
  cell('lil', 12, r, d[8]);
});
for (const c of [0, 1, 3, 5, 6, 7, 8, 9]) cell('cyan', c, 20);
cell('cyan bd mid', 2, 20, ['TỔNG', 50]);
cell('yel', 4, 20);
num('org bd tri', 10, 20, '1,412,250');
num('org bd tri', 11, 20, '16,215,454,500');
cell('lil', 12, 20);

// column letters and row numbers
div('hd top', -1, 0);
'ABCDEFGHIJKLM'.split('').forEach((l, i) => {
  div('hd top', i, 0).innerHTML = `<span class="fit c" data-w="${l === 'I' ? 5 : l === 'J' ? 9 : 14}">${l}</span>`;
});
div('hd top', 13, 0);
for (let r = 1; r <= 31; r++) {
  div('hd', -1, r).innerHTML = `<span class="fit c" data-w="${r < 10 ? 10 : 22}">${r}</span>`;
  if (r === 24) sheet.lastChild.classList.add('sel');
}

// stretch each label to its set width
document.querySelectorAll('.fit').forEach(s => {
  const w = s.offsetWidth;
  if (w) s.style.transform = `scaleX(${s.dataset.w / w})`;
});
```
